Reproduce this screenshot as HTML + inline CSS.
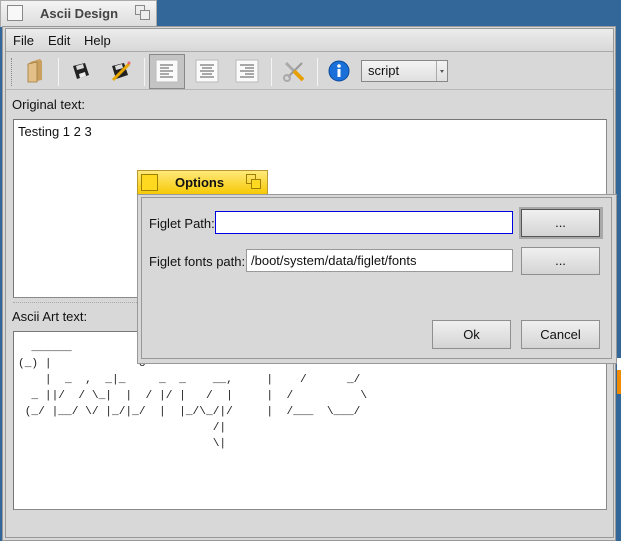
<!DOCTYPE html>
<html><head><style>
*{margin:0;padding:0;box-sizing:border-box}
body{width:621px;height:541px;background:#336699;position:relative;overflow:hidden;font-family:"Liberation Sans",sans-serif;font-size:13px;color:#111}
.a{position:absolute}
.tab{left:0;top:0;width:157px;height:27px;background:linear-gradient(#f4f4f4,#dcdcdc);border:1px solid #aaa;border-bottom:none}
.win{left:2px;top:26px;width:614px;height:515px;background:#d8d8d8;border:1px solid #999}
.inner{left:5px;top:28px;width:609px;height:510px;border:1px solid #999;background:#d8d8d8}
.box{background:#fff;border:1px solid #8a8a8a;border-top-color:#777;border-left-color:#777}
.btn{background:linear-gradient(#f0f0f0,#d4d4d4);border:1px solid #8f8f8f;text-align:center;font-size:13px}
.sep{width:1px;height:28px;top:58px;background:#bbb;border-right:1px solid #f4f4f4}
pre{font-family:"Liberation Mono",monospace;font-size:11.2px;line-height:16px;color:#222}
</style></head><body>
<div class="a tab"></div>
<div class="a" style="left:7px;top:5px;width:16px;height:16px;border:1px solid #888;background:#f8f8f8"></div>
<div class="a" style="left:40px;top:6px;font-weight:bold;font-size:13px;color:#444">Ascii Design</div>
<div class="a" style="left:135px;top:5px;width:10px;height:10px;border:1px solid #888"></div>
<div class="a" style="left:140px;top:10px;width:10px;height:10px;border:1px solid #888;background:#eee"></div>
<div class="a win"></div>
<div class="a inner"></div>
<div class="a" style="left:6px;top:29px;width:607px;height:23px;background:linear-gradient(#ececec,#d8d8d8);border-bottom:1px solid #aaa"></div>
<div class="a" style="left:13px;top:33px">File</div>
<div class="a" style="left:48px;top:33px">Edit</div>
<div class="a" style="left:84px;top:33px">Help</div>
<div class="a" style="left:6px;top:89px;width:607px;height:1px;background:#b8b8b8"></div>
<div class="a" style="left:11px;top:58px;width:1px;height:28px;border-left:1px dotted #888"></div>
<svg class="a" style="left:24px;top:58px" width="22" height="26"><path d="M6 4 L16 1 L18 3 L18 22 L8 24 Z" fill="#c9a060"/><path d="M4 6 L13 4 L13 24 L4 24 Z" fill="#e2c088" stroke="#a07838" stroke-width=".8"/></svg>
<div class="a sep" style="left:58px"></div>
<svg class="a" style="left:71px;top:62px" width="20" height="20"><path d="M2 4 L14 1 L18 13 L6 17 Z" fill="#222"/><path d="M5 4 L12 2 L13 6 L6 8Z" fill="#ddd"/><path d="M8 12 L14 10 L15 14 L9 16Z" fill="#eee"/></svg>
<svg class="a" style="left:110px;top:60px" width="22" height="22"><path d="M2 6 L14 3 L18 15 L6 19 Z" fill="#222"/><path d="M5 6 L12 4 L13 8 L6 10Z" fill="#ddd"/><path d="M3 20 L19 4" stroke="#e8a800" stroke-width="3"/><circle cx="19" cy="3" r="1.5" fill="#e66"/></svg>
<div class="a sep" style="left:144px"></div>
<div class="a" style="left:149px;top:54px;width:36px;height:35px;background:#c4c4c4;border:1px solid #888"></div>
<svg class="a" style="left:155px;top:59px" width="24" height="24"><rect x="1" y="1" width="22" height="22" fill="#fafafa" stroke="#bbb"/><path d="M5 6h13M5 9h9M5 12h13M5 15h9M5 18h13" stroke="#555"/></svg>
<svg class="a" style="left:195px;top:59px" width="24" height="24"><rect x="1" y="1" width="22" height="22" fill="#fafafa" stroke="#bbb"/><path d="M5 6h14M7 9h10M5 12h14M7 15h10M5 18h14" stroke="#555"/></svg>
<svg class="a" style="left:235px;top:59px" width="24" height="24"><rect x="1" y="1" width="22" height="22" fill="#fafafa" stroke="#bbb"/><path d="M5 6h14M10 9h9M5 12h14M10 15h9M5 18h14" stroke="#555"/></svg>
<div class="a sep" style="left:271px"></div>
<svg class="a" style="left:282px;top:59px" width="24" height="24"><path d="M4 4 L20 20" stroke="#aaa" stroke-width="3"/><path d="M20 4 L6 18" stroke="#999" stroke-width="2"/><path d="M12 12 L21 21" stroke="#e8a000" stroke-width="4"/><circle cx="5" cy="19" r="3" fill="none" stroke="#aaa" stroke-width="2"/></svg>
<div class="a sep" style="left:317px"></div>
<svg class="a" style="left:328px;top:60px" width="22" height="22"><circle cx="11" cy="11" r="10" fill="#1a6fd8" stroke="#0a4a9a"/><circle cx="11" cy="6" r="1.8" fill="#fff"/><rect x="9.5" y="9" width="3" height="8" fill="#fff"/></svg>
<div class="a" style="left:361px;top:60px;width:87px;height:22px;background:linear-gradient(#f4f4f4,#e0e0e0);border:1px solid #888"></div>
<div class="a" style="left:368px;top:63px;font-size:13px">script</div>
<div class="a" style="left:436px;top:61px;width:1px;height:20px;background:#aaa"></div>
<div class="a" style="left:440px;top:70px;border:2px solid transparent;border-top:3px solid #555"></div>
<div class="a" style="left:12px;top:97px">Original text:</div>
<div class="a box" style="left:13px;top:119px;width:594px;height:179px"></div>
<div class="a" style="left:18px;top:124px">Testing 1 2 3</div>
<div class="a" style="left:13px;top:302px;width:594px;border-top:1px dotted #aaa"></div>
<div class="a" style="left:12px;top:309px">Ascii Art text:</div>
<div class="a box" style="left:13px;top:331px;width:594px;height:179px"></div>
<pre class="a" style="left:18px;top:340px">  ______
(_) |             o
    |  _  ,  _|_     _  _    __,     |    /      _/
  _ ||/  / \_|  |  / |/ |   /  |     |  /          \
 (_/ |__/ \/ |_/|_/  |  |_/\_/|/     |  /___  \___/
                             /|
                             \|</pre>
<div class="a" style="left:617px;top:358px;width:4px;height:12px;background:#fff"></div>
<div class="a" style="left:617px;top:370px;width:4px;height:24px;background:#f08a00"></div>
<div class="a" style="left:137px;top:170px;width:131px;height:25px;background:linear-gradient(#ffe97a,#f6c800);border:1px solid #b89a30;border-bottom:none"></div>
<div class="a" style="left:141px;top:174px;width:17px;height:17px;border:1px solid #a08000;background:#ffd820"></div>
<div class="a" style="left:175px;top:175px;font-weight:bold;font-size:13px">Options</div>
<div class="a" style="left:246px;top:174px;width:10px;height:10px;border:1px solid #a08000"></div>
<div class="a" style="left:251px;top:179px;width:10px;height:10px;border:1px solid #a08000;background:#ffd820"></div>
<div class="a" style="left:137px;top:194px;width:480px;height:170px;background:#d8d8d8;border:1px solid #999"></div>
<div class="a" style="left:141px;top:197px;width:471px;height:162px;border:1px solid #999"></div>
<div class="a" style="left:149px;top:216px">Figlet Path:</div>
<div class="a" style="left:215px;top:211px;width:298px;height:23px;background:#fff;border:1px solid #0000e0"></div>
<div class="a" style="left:519px;top:207px;width:84px;height:32px;background:#a8a8a8"></div>
<div class="a btn" style="left:521px;top:209px;width:79px;height:28px;border-color:#555;line-height:26px">...</div>
<div class="a" style="left:149px;top:254px">Figlet fonts path:</div>
<div class="a" style="left:246px;top:249px;width:267px;height:23px;background:#fff;border:1px solid #999"></div>
<div class="a" style="left:251px;top:253px">/boot/system/data/figlet/fonts</div>
<div class="a btn" style="left:521px;top:247px;width:79px;height:28px;line-height:26px">...</div>
<div class="a btn" style="left:432px;top:320px;width:79px;height:29px;line-height:27px">Ok</div>
<div class="a btn" style="left:521px;top:320px;width:79px;height:29px;line-height:27px">Cancel</div>
</body></html>
